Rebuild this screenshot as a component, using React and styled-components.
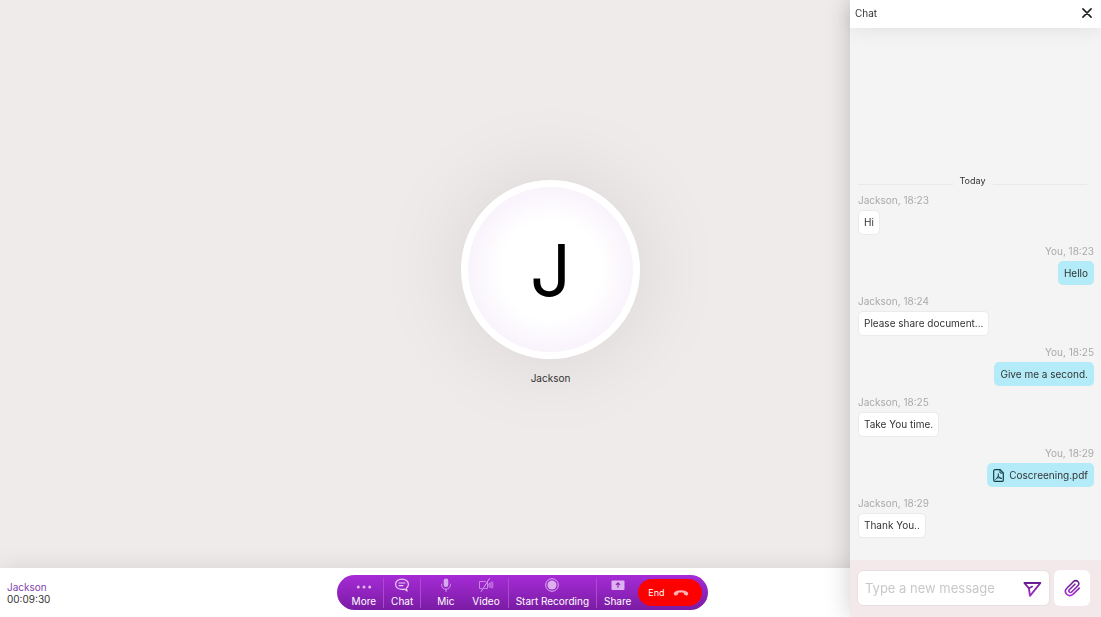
import React, { useState } from "react";
import styled, { createGlobalStyle } from "styled-components";

const conversation = [
  { from: "Jackson", time: "18:23", text: "Hi" },
  { from: "You", time: "18:23", text: "Hello" },
  { from: "Jackson", time: "18:24", text: "Please share document..." },
  { from: "You", time: "18:25", text: "Give me a second." },
  { from: "Jackson", time: "18:25", text: "Take You time." },
  { from: "You", time: "18:29", text: "Coscreening.pdf", file: true },
  { from: "Jackson", time: "18:29", text: "Thank You.." },
];

const MoreIcon = () => (
  <svg width="16" height="14" viewBox="0 0 16 14" fill="#e0b8f0">
    <circle cx="2.3" cy="9" r="1.5" />
    <circle cx="8" cy="9" r="1.5" />
    <circle cx="13.7" cy="9" r="1.5" />
  </svg>
);

const ChatIcon = () => (
  <svg width="14" height="14" viewBox="0 0 14 14" fill="none" stroke="#e8cdf4" strokeLinecap="round" strokeLinejoin="round">
    <path d="M11.2 10.4C12.6 9.5 13.4 8 13.4 6.3 13.4 3.2 10.5 1.2 7 1.2S.6 3.2.6 6.3 3.5 11.3 7 11.3c.8 0 1.4-.1 2-.2l3.2 1.9z" strokeWidth="1.2" />
    <path d="M4 5h6M4 7.6h4" strokeWidth="1.1" />
  </svg>
);

const MicIcon = () => (
  <svg width="12" height="14" viewBox="0 0 12 14" fill="none">
    <rect x="3.7" y=".5" width="4.6" height="8.6" rx="2.3" fill="#d9a9ee" />
    <path d="M1.6 6.2v.6a4.4 4.4 0 0 0 8.8 0v-.6M6 11.2v2.3" stroke="#cf96e8" strokeLinecap="round" />
  </svg>
);

const VideoIcon = () => (
  <svg width="16" height="14" viewBox="0 0 16 14" fill="none" stroke="#c987e4" strokeLinecap="round" strokeLinejoin="round">
    <path d="M7.5 3.5h-6v7h2M6.5 10.5h3v-6" />
    <path d="M9.8 7 12 5v4z" />
    <rect x="13" y="4" width="1.8" height="6" rx=".9" />
    <path d="M11.4.6 3.2 13.4" stroke="#d9a6ee" />
  </svg>
);

const RecordIcon = () => (
  <svg width="14" height="14" viewBox="0 0 14 14" fill="none">
    <circle cx="7" cy="7" r="6.3" stroke="#deb0f0" />
    <circle cx="7" cy="7" r="4.5" fill="#deb0f0" />
  </svg>
);

const ShareIcon = () => (
  <svg width="14" height="14" viewBox="0 0 14 14" fill="none">
    <rect x=".5" y="2.4" width="13" height="9.6" rx="1" fill="#deb2f0" />
    <path d="M7 9.8V5M4.9 6.9 7 4.8l2.1 2.1" stroke="#8a22b8" strokeWidth="1.1" />
  </svg>
);

const HangUpIcon = () => (
  <svg width="16" height="8" viewBox="0 0 16 8" fill="#ffb4b4">
    <path d="M8 1.2C5 1.2 2.6 2 1.2 3.4c-.6.6-.6 1.4-.2 2l.6.9c.3.4.7.5 1.1.3l1.9-.9c.4-.2.6-.5.6-.9l.1-1c1.7-.5 3.7-.5 5.4 0l.1 1c0 .4.2.7.6.9l1.9.9c.4.2.8.1 1.1-.3l.6-.9c.4-.6.4-1.4-.2-2C13.4 2 11 1.2 8 1.2z" />
  </svg>
);

const CloseIcon = () => (
  <svg width="10" height="10" viewBox="0 0 10 10" fill="none" stroke="#222" strokeWidth="1.6" strokeLinecap="round">
    <path d="M.9.9l8.2 8.2M9.1.9.9 9.1" />
  </svg>
);

const PdfIcon = () => (
  <svg width="11" height="13" viewBox="0 0 11 13" fill="none" stroke="#163d47" strokeLinejoin="round">
    <path d="M2 .7h5.2l3.1 3.1v7.5a1 1 0 0 1-1 1H2A1.3 1.3 0 0 1 .7 11V2A1.3 1.3 0 0 1 2 .7z" strokeWidth="1.2" />
    <path d="M7 .8V4h3.2" />
    <path d="M5.3 4.8c.4 2.6-.6 4.2-2.6 5.5M5.3 6.5c.5 1.7 1.5 2.5 3.2 2.9M3.9 8.9c1.3-.3 2.5-.3 4.5.4" strokeLinecap="round" />
  </svg>
);

const SendIcon = () => (
  <svg width="19" height="17" viewBox="0 0 19 17" fill="none" strokeLinejoin="round" strokeLinecap="round">
    <defs>
      <linearGradient id="send" x1="0" y1="0" x2="0" y2="17" gradientUnits="userSpaceOnUse">
        <stop offset="0" stopColor="#5b1a80" />
        <stop offset="1" stopColor="#a92ad6" />
      </linearGradient>
    </defs>
    <path d="M1.4 3H17.4L7 15.9 5.9 8.3z" stroke="url(#send)" strokeWidth="1.8" />
    <path d="M5.9 8.3 9.3 6.5" stroke="url(#send)" strokeWidth="1.6" />
  </svg>
);

const ClipIcon = () => (
  <svg width="18" height="18" viewBox="0 0 18 18" fill="none" strokeLinejoin="round" strokeLinecap="round">
    <defs>
      <linearGradient id="clip" x1="0" y1="0" x2="0" y2="18" gradientUnits="userSpaceOnUse">
        <stop offset="0" stopColor="#5b1a80" />
        <stop offset="1" stopColor="#b32ee0" />
      </linearGradient>
    </defs>
    <path
      d="M16.3 9.2 9.9 15.3a4.3 4.3 0 0 1-6.4-.2 4.3 4.3 0 0 1 .3-5.8L10.6 2.5a3 3 0 0 1 4.3 0 3 3 0 0 1 0 4.3L8.6 13a1.6 1.6 0 0 1-2.3 0 1.6 1.6 0 0 1 0-2.3L11.9 5.2"
      stroke="url(#clip)"
      strokeWidth="1.6"
    />
  </svg>
);

export default function App() {
  const [message, setMessage] = useState("");
  const [chatOpen, setChatOpen] = useState(true);

  return (
    <>
      <GlobalStyle />
      <Page>
        <Stage>
          <Avatar>J</Avatar>
          <Name>Jackson</Name>
        </Stage>
        <Footer>
          <CallInfo>
            <span className="caller">Jackson</span>
            <span>00:09:30</span>
          </CallInfo>
          <Controls>
            <Group>
              <Control>
                <MoreIcon />
                More
              </Control>
            </Group>
            <Group>
              <Control onClick={() => setChatOpen(!chatOpen)}>
                <ChatIcon />
                Chat
              </Control>
            </Group>
            <Group $wide>
              <Control>
                <MicIcon />
                Mic
              </Control>
              <Control>
                <VideoIcon />
                Video
              </Control>
            </Group>
            <Group>
              <Control>
                <RecordIcon />
                Start Recording
              </Control>
            </Group>
            <Group>
              <Control>
                <ShareIcon />
                Share
              </Control>
            </Group>
            <EndButton>
              End
              <HangUpIcon />
            </EndButton>
          </Controls>
        </Footer>
      </Page>
      {chatOpen && (
        <ChatPanel>
          <ChatHeader>
            <h2>Chat</h2>
            <IconButton aria-label="Close chat" onClick={() => setChatOpen(false)}>
              <CloseIcon />
            </IconButton>
          </ChatHeader>
          <Messages>
            <Day>Today</Day>
            {conversation.map((msg, index) => {
              const mine = msg.from === "You";
              return (
                <Message key={index} $mine={mine}>
                  <Meta>
                    {msg.from}, {msg.time}
                  </Meta>
                  <Bubble $mine={mine}>
                    {msg.file && <PdfIcon />}
                    {msg.text}
                  </Bubble>
                </Message>
              );
            })}
          </Messages>
          <Composer onSubmit={(e) => e.preventDefault()}>
            <Field>
              <input
                type="text"
                aria-label="Message"
                placeholder="Type a new message"
                value={message}
                onChange={(e) => setMessage(e.target.value)}
              />
              <IconButton type="submit" aria-label="Send">
                <SendIcon />
              </IconButton>
            </Field>
            <AttachButton type="button" aria-label="Attach file">
              <ClipIcon />
            </AttachButton>
          </Composer>
        </ChatPanel>
      )}
    </>
  );
}

const GlobalStyle = createGlobalStyle`
  * {
    box-sizing: border-box;
  }
  body {
    margin: 0;
    font-family: Inter, "Liberation Sans", sans-serif;
    font-size: 10px;
    color: #333;
  }
  button, input {
    font: inherit;
    border: none;
    padding: 0;
    background: none;
  }
  button {
    cursor: pointer;
  }
  svg {
    display: block;
    flex-shrink: 0;
  }
`;

const Page = styled.div`
  min-height: 100vh;
  display: flex;
  flex-direction: column;
  background-color: #eeebea;
`;

const Stage = styled.main`
  flex: 1;
  display: flex;
  flex-direction: column;
  align-items: center;
  justify-content: center;
  gap: 11px;
  padding-bottom: 2px;
`;

const Avatar = styled.div`
  width: 179px;
  height: 179px;
  display: flex;
  align-items: center;
  justify-content: center;
  border: 7px solid white;
  border-radius: 50%;
  background: radial-gradient(circle closest-side, #ffffff 60%, #f9f3fc 100%);
  box-shadow: 0 0 90px rgba(0, 0, 0, 0.1);
  font-size: 72px;
  color: black;
`;

const Name = styled.div`
  line-height: 16px;
`;

const Footer = styled.footer`
  display: grid;
  grid-template-columns: 1fr auto 1fr;
  align-items: center;
  padding: 7px 63px 7px 7px;
  background-color: white;
  box-shadow: 0 0 24px rgba(0, 0, 0, 0.1);
`;

const CallInfo = styled.div`
  display: flex;
  flex-direction: column;
  line-height: 12px;
  .caller {
    color: #8345ab;
  }
`;

const Controls = styled.div`
  height: 35px;
  display: flex;
  align-items: center;
  padding: 0 6px 0 8px;
  border-radius: 18px;
  background: linear-gradient(#a62bd6, #7a1ca4);
`;

const Group = styled.div`
  display: flex;
  gap: 18px;
  padding: ${(props) => (props.$wide ? "0 8px 0 16px" : "0 7px")};
  & + & {
    border-left: 1px solid #aa4bcf;
  }
`;

const Control = styled.button`
  height: 30px;
  display: flex;
  flex-direction: column;
  align-items: center;
  justify-content: space-between;
  line-height: 14px;
  color: white;
`;

const EndButton = styled.button`
  width: 64px;
  height: 27px;
  display: flex;
  align-items: center;
  justify-content: center;
  gap: 8px;
  padding-right: 4px;
  border-radius: 14px;
  background-color: #ff0000;
  color: white;
  font-size: 9px;
`;

const ChatPanel = styled.aside`
  position: fixed;
  top: 0;
  right: 0;
  bottom: 0;
  width: 251px;
  display: flex;
  flex-direction: column;
  background-color: #f4f4f4;
  box-shadow: 0 0 24px rgba(0, 0, 0, 0.2);
`;

const ChatHeader = styled.header`
  display: flex;
  align-items: center;
  justify-content: space-between;
  padding: 5px 9px 7px 5px;
  background-color: white;
  box-shadow: 0 2px 20px rgba(0, 0, 0, 0.08);
  h2 {
    margin: 0;
    font-size: 10px;
    font-weight: 400;
    line-height: 16px;
  }
`;

const IconButton = styled.button`
  display: flex;
`;

const Messages = styled.div`
  flex: 1;
  display: flex;
  flex-direction: column;
  justify-content: flex-end;
  padding: 0 7px 22px 8px;
`;

const Day = styled.div`
  display: flex;
  align-items: center;
  gap: 7px;
  margin-bottom: 4px;
  padding-right: 7px;
  font-size: 9px;
  line-height: 14px;
  &::before,
  &::after {
    content: "";
    flex: 1;
    height: 1px;
    margin-top: 6px;
    background-color: #e9e9e9;
  }
`;

const Message = styled.div`
  display: flex;
  flex-direction: column;
  align-items: ${(props) => (props.$mine ? "flex-end" : "flex-start")};
  gap: 2px;
  & + & {
    margin-top: 8px;
  }
`;

const Meta = styled.div`
  line-height: 16px;
  color: #aaa;
`;

const Bubble = styled.div`
  display: flex;
  align-items: center;
  gap: 5px;
  padding: ${(props) => (props.$mine ? "4px 6px" : "4px 5px")};
  border: ${(props) => (props.$mine ? "none" : "1px solid #ebebeb")};
  border-radius: 5px;
  background-color: ${(props) => (props.$mine ? "#b3ecf8" : "white")};
  line-height: ${(props) => (props.$mine ? "16px" : "15px")};
`;

const Composer = styled.form`
  display: flex;
  gap: 4px;
  padding: 10px 11px 11px 7px;
  background-color: #f3e9ea;
`;

const Field = styled.div`
  flex: 1;
  min-width: 0;
  height: 36px;
  display: flex;
  align-items: center;
  padding: 0 7px;
  border: 1px solid #e6dfe0;
  border-radius: 6px;
  background-color: white;
  input {
    flex: 1;
    min-width: 0;
    outline: none;
    font-size: 13px;
  }
  input::placeholder {
    color: #c8c8c8;
  }
`;

const AttachButton = styled.button`
  width: 36px;
  height: 36px;
  display: flex;
  align-items: center;
  justify-content: center;
  border-radius: 6px;
  background-color: white;
`;
